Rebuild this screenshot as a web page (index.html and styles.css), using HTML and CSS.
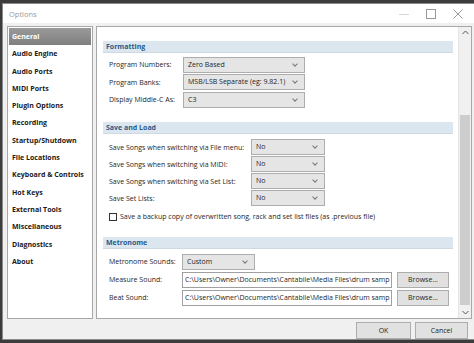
FILE: index.html
```html
<!DOCTYPE html>
<html>
<head>
<meta charset="utf-8">
<link rel="stylesheet" href="styles.css">
</head>
<body>
<div class="window">
  <div class="titlebar">
    <span class="title">Options</span>
    <div class="controls">
      <span class="ctl min"><svg width="10" height="10" viewBox="0 0 10 10"><path d="M0 5.5h10" stroke="#bbb" stroke-width="1"/></svg></span>
      <span class="ctl max"><svg width="10" height="10" viewBox="0 0 10 10"><rect x="0.5" y="0.5" width="9" height="9" fill="none" stroke="#999" stroke-width="1"/></svg></span>
      <span class="ctl close"><svg width="10" height="10" viewBox="0 0 10 10"><path d="M0.5 0.5L9.5 9.5M9.5 0.5L0.5 9.5" stroke="#999" stroke-width="1"/></svg></span>
    </div>
  </div>
  <div class="body">
    <div class="main">
      <ul class="sidebar">
        <li class="active">General</li>
        <li>Audio Engine</li>
        <li>Audio Ports</li>
        <li>MIDI Ports</li>
        <li>Plugin Options</li>
        <li>Recording</li>
        <li>Startup/Shutdown</li>
        <li>File Locations</li>
        <li>Keyboard &amp; Controls</li>
        <li>Hot Keys</li>
        <li>External Tools</li>
        <li>Miscellaneous</li>
        <li>Diagnostics</li>
        <li>About</li>
      </ul>
      <div class="panel">
        <div class="content">
          <div class="section-head">Formatting</div>
          <div class="rows fmt">
            <div class="row"><span class="label">Program Numbers:</span><span class="select w122">Zero Based</span></div>
            <div class="row"><span class="label">Program Banks:</span><span class="select w122">MSB/LSB Separate (eg: 9.82.1)</span></div>
            <div class="row"><span class="label">Display Middle-C As:</span><span class="select w122">C3</span></div>
          </div>
          <div class="section-head">Save and Load</div>
          <div class="rows save">
            <div class="row"><span class="label">Save Songs when switching via File menu:</span><span class="select w74">No</span></div>
            <div class="row"><span class="label">Save Songs when switching via MIDI:</span><span class="select w74">No</span></div>
            <div class="row"><span class="label">Save Songs when switching via Set List:</span><span class="select w74">No</span></div>
            <div class="row"><span class="label">Save Set Lists:</span><span class="select w74">No</span></div>
            <div class="check"><span class="box"></span>Save a backup copy of overwritten song, rack and set list files (as .previous file)</div>
          </div>
          <div class="section-head">Metronome</div>
          <div class="rows metro">
            <div class="row"><span class="label">Metronome Sounds:</span><span class="select w73">Custom</span></div>
            <div class="row"><span class="label">Measure Sound:</span><span class="input">C:\Users\Owner\Documents\Cantabile\Media Files\drum samp</span><span class="btn browse">Browse...</span></div>
            <div class="row"><span class="label">Beat Sound:</span><span class="input">C:\Users\Owner\Documents\Cantabile\Media Files\drum samp</span><span class="btn browse">Browse...</span></div>
          </div>
        </div>
        <div class="scrollbar">
          <span class="arrow up"><svg width="7" height="5" viewBox="0 0 7 5"><path d="M0.5 4L3.5 1L6.5 4" fill="none" stroke="#555" stroke-width="1"/></svg></span>
          <div class="track"><div class="thumb"></div></div>
          <span class="arrow down"><svg width="7" height="5" viewBox="0 0 7 5"><path d="M0.5 1L3.5 4L6.5 1" fill="none" stroke="#555" stroke-width="1"/></svg></span>
        </div>
      </div>
    </div>
    <div class="footer">
      <span class="btn ok">OK</span>
      <span class="btn cancel">Cancel</span>
    </div>
  </div>
</div>
</body>
</html>
```
FILE: styles.css
```css
* { box-sizing: border-box; }
html, body { margin: 0; padding: 0; }
body {
  width: 474px;
  height: 343px;
  background: #3c3c3c;
  overflow: hidden;
  font-family: "Open Sans", "Noto Sans", sans-serif;
  font-size: 7px;
  color: #1e1e1e;
  padding: 3px 0 0 2px;
}
.window {
  width: 474px;
  height: 337px;
  background: #f0f0f0;
  border: 1px solid #8a8a8a;
  border-right: none;
  display: flex;
  flex-direction: column;
}
.titlebar {
  height: 19px;
  background: #fff;
  display: flex;
  align-items: center;
  justify-content: space-between;
}
.title {
  color: #9a9a9a;
  font-size: 7.5px;
  padding-left: 6px;
}
.controls { display: flex; height: 100%; padding-right: 5px; }
.ctl {
  width: 27px;
  display: flex;
  align-items: center;
  justify-content: center;
}
.ctl.min svg { opacity: 0.6; }
.body {
  flex: 1;
  display: flex;
  flex-direction: column;
  padding: 3px 4px 0 4px;
}
.main {
  display: flex;
  gap: 3px;
  height: 293px;
}
.sidebar {
  list-style: none;
  margin: 0;
  padding: 1px 1px;
  width: 86px;
  background: #fff;
  border: 1px solid #a8a8a8;
}
.sidebar li {
  height: 17.3px;
  line-height: 17.3px;
  padding-left: 3px;
  font-weight: bold;
  font-size: 7px;
  color: #1a1a1a;
  white-space: nowrap;
}
.sidebar li.active {
  background: linear-gradient(#9a9a9a, #7f7f7f);
  color: #fff;
}
.panel {
  flex: 1;
  background: #fff;
  border: 1px solid #a8a8a8;
  display: flex;
}
.content {
  flex: 1;
  padding: 14px 5px 0 6px;
  overflow: hidden;
}
.section-head {
  height: 12px;
  line-height: 12px;
  background: #dce6ef;
  border-bottom: 1px solid #cfd9e3;
  color: #2a5a8a;
  font-weight: bold;
  padding-left: 3px;
}
.rows { padding-left: 6px; }
.rows.fmt { padding-top: 3px; padding-bottom: 13px; }
.rows.save { padding-top: 5px; padding-bottom: 11px; }
.rows.metro { padding-top: 4px; }
.row {
  display: flex;
  align-items: center;
  height: 17.5px;
}
.save .row { height: 17px; }
.metro .row { height: 18px; }
.fmt .label { width: 74px; }
.save .label { width: 142px; }
.metro .label { width: 73px; }
.label { white-space: nowrap; }
.select {
  height: 16px;
  line-height: 14px;
  background: #e5e5e5;
  border: 1px solid #adadad;
  padding-left: 4px;
  position: relative;
  white-space: nowrap;
}
.select::after {
  content: "";
  position: absolute;
  right: 7px;
  top: 4px;
  width: 3px;
  height: 3px;
  border-right: 1px solid #777;
  border-bottom: 1px solid #777;
  transform: rotate(45deg);
}
.w122 { width: 122px; }
.w74 { width: 74px; }
.w73 { width: 73px; }
.check {
  display: flex;
  align-items: center;
  height: 18px;
  margin-top: 1px;
}
.box {
  width: 8px;
  height: 8px;
  border: 1px solid #333;
  background: #fff;
  margin-right: 3px;
}
.input {
  width: 210px;
  height: 16px;
  line-height: 14px;
  border: 1px solid #a0a0a0;
  background: #fff;
  padding-left: 2px;
  white-space: nowrap;
  overflow: hidden;
}
.btn {
  display: flex;
  align-items: center;
  justify-content: center;
  background: #e1e1e1;
  border: 1px solid #adadad;
}
.browse {
  width: 52px;
  height: 16px;
  margin-left: 5px;
}
.scrollbar {
  width: 13px;
  background: #f0f0f0;
  display: flex;
  flex-direction: column;
  border-left: 1px solid #e6e6e6;
}
.arrow {
  height: 11px;
  display: flex;
  align-items: center;
  justify-content: center;
}
.track { flex: 1; position: relative; }
.thumb {
  position: absolute;
  left: 1px;
  right: 1px;
  top: 77px;
  bottom: 2px;
  background: #cdcdcd;
}
.footer {
  display: flex;
  justify-content: flex-end;
  gap: 4px;
  padding-top: 3px;
  padding-right: 4px;
}
.footer .btn {
  height: 17px;
}
.ok { width: 55px; }
.cancel { width: 53px; }
```
